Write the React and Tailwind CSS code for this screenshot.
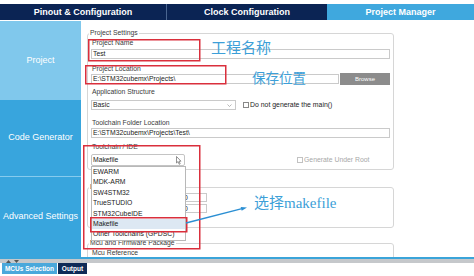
import React from "react";

const lbl = "text-[6.8px] leading-[8px] pl-[1px] text-[#3a3a3a] whitespace-nowrap";
const inp = "h-[10px] border border-[#cacaca] bg-white text-[6.8px] leading-[8px] pl-[1px] text-[#222] whitespace-nowrap overflow-hidden";

function Cursor() {
  return (
    <svg width="6" height="9" viewBox="0 0 6 9" className="shrink-0">
      <path d="M0.5 0.5 L0.5 7 L2 5.6 L3.2 8.3 L4.2 7.8 L3 5.2 L5 5.2 Z" fill="#fff" stroke="#666" strokeWidth="0.7" />
    </svg>
  );
}

export default function App() {
  const items = ["EWARM", "MDK-ARM", "SW4STM32", "TrueSTUDIO", "STM32CubeIDE", "Makefile", "Other Toolchains (GPDSC)"];
  const boxes = [
    [88.75, 39.75, 111, 21],
    [85.75, 65.75, 140, 18],
    [83.75, 145.75, 116, 103],
    [90.75, 217.75, 96, 14],
  ];
  return (
    <div className="relative w-[474px] h-[276px] overflow-hidden bg-white font-['Liberation_Sans',Arial,sans-serif] text-[#333]">
      <div className="h-[4px]" />
      <div className="flex h-[16px] text-[9px] font-bold text-white leading-[16px]">
        <div className="w-[166px] bg-[#0b2454] text-center">Pinout &amp; Configuration</div>
        <div className="w-[1px] bg-[#4a6590]" />
        <div className="w-[160px] bg-[#0b2454] text-center">Clock Configuration</div>
        <div className="flex-1 bg-[#3fa8de] text-center">Project Manager</div>
      </div>
      <div className="h-[1px]" />
      <div className="flex h-[236px]">
        <div className="w-[81px] flex flex-col text-white text-[9px]">
          <div className="h-[79px] bg-[#80c8ec] flex items-center justify-center">Project</div>
          <div className="h-[76px] bg-[#38a5dd] flex items-center justify-center">Code Generator</div>
          <div className="h-[1px] bg-[#86cbee]" />
          <div className="flex-1 bg-[#38a5dd] flex items-center justify-center">Advanced Settings</div>
        </div>
        <div className="w-[1px]" />
        <div className="flex-1 pl-[5px] overflow-hidden">
          <fieldset className="mt-[8px] w-[307px] border border-[#d6d6d6] rounded-[3px] px-[3px] pb-[3px]">
            <legend className="ml-[-2px] px-[1px] text-[6.8px] leading-[8px] text-[#3a3a3a]">Project Settings</legend>
            <div className={`mt-[2px] ${lbl}`}>Project Name</div>
            <div className={`mt-[2px] ${inp}`}>Test</div>
            <div className={`mt-[6px] ${lbl}`}>Project Location</div>
            <div className="flex items-center h-[12px]">
              <div className={`w-[248px] ${inp}`}>{"E:\\STM32cubemx\\Projects\\"}</div>
              <div className="ml-[1px] w-[50px] h-[12px] bg-[#8c8c8c] text-white text-[6px] text-center leading-[12px]">Browse</div>
            </div>
            <div className={`mt-[3px] ${lbl}`}>Application Structure</div>
            <div className="mt-[4px] flex items-center h-[10px]">
              <div className={`w-[145px] flex items-center justify-between pr-[3px] ${inp}`}>
                <span>Basic</span>
                <svg width="5" height="3" viewBox="0 0 5 3"><path d="M0.5 0.5 L2.5 2.5 L4.5 0.5" fill="none" stroke="#999" strokeWidth="0.7" /></svg>
              </div>
              <div className="ml-[7px] w-[6px] h-[6px] border border-[#888] bg-white" />
              <div className="ml-[1px] text-[6.9px] leading-[8px] text-[#222]">Do not generate the main()</div>
            </div>
            <div className={`mt-[9px] ${lbl}`}>Toolchain Folder Location</div>
            <div className={`mt-[1px] ${inp}`}>{"E:\\STM32cubemx\\Projects\\Test\\"}</div>
            <div className={`mt-[5px] ${lbl}`}>Toolchain / IDE</div>
            <div className="mt-[3px] flex items-center h-[12px]">
              <div className="w-[94px] h-[12px] border border-[#c4c4c4] rounded-[2px] flex items-center justify-between pl-[1px] pr-[2px] text-[6.8px] leading-[8px] text-[#222]">
                <span>Makefile</span>
                <Cursor />
              </div>
              <div className="ml-[112px] w-[6px] h-[6px] border border-[#c2c2c2] bg-white" />
              <div className="ml-[1px] text-[6.85px] leading-[8px] text-[#a8a8a8]">Generate Under Root</div>
            </div>
          </fieldset>

          <fieldset className="mt-[13px] w-[307px] border border-[#d6d6d6] rounded-[3px] px-[3px] pb-[14px]">
            <legend className="ml-[-2px] px-[1px] text-[6.8px] leading-[8px] text-[#3a3a3a]">L</legend>
            <div className="mt-[2px] flex items-center h-[9px]">
              <div className="w-[79px]" />
              <div className="w-[37px] h-[9px] border border-[#cacaca] text-[6.8px] leading-[7px] pl-[13px] text-[#222]">0</div>
            </div>
            <div className="mt-[2px] flex items-center h-[9px]">
              <div className="w-[79px]" />
              <div className="w-[37px] h-[9px] border border-[#cacaca] text-[6.8px] leading-[7px] pl-[13px] text-[#222]">0</div>
            </div>
          </fieldset>

          <fieldset className="mt-[11px] w-[307px] border border-[#d6d6d6] rounded-[3px] px-[3px] pb-[10px]">
            <legend className="ml-[-2px] px-[1px] text-[6.8px] leading-[8px] text-[#3a3a3a]">Mcu and Firmware Package</legend>
            <div className={`mt-[2px] ${lbl}`}>Mcu Reference</div>
          </fieldset>
        </div>
      </div>
      <div className="h-[2px] bg-[#3aa4d9]" />
      <div className="h-[4px] bg-[#c5c8cb] flex items-center pl-[6px] gap-[3px]">
        <svg width="5" height="3" viewBox="0 0 5 3"><path d="M0 3 L2.5 0 L5 3 Z" fill="#555" /></svg>
        <svg width="5" height="3" viewBox="0 0 5 3"><path d="M0 0 L2.5 3 L5 0 Z" fill="#555" /></svg>
      </div>
      <div className="flex h-[11px] pl-[2px] gap-[1px] text-[6.5px] font-bold text-white leading-[11px]">
        <div className="w-[55px] bg-[#4aa8db] text-center">MCUs Selection</div>
        <div className="w-[29px] bg-[#0f2b57] text-center">Output</div>
      </div>

      {/* open dropdown list */}
      <div className="absolute left-[91px] top-[166px] w-[95px] h-[75px] bg-white border border-[#b8b8b8] text-[6.8px] text-[#222]">
        {items.map((t) => (
          <div key={t} className={`h-[10.4px] leading-[10.4px] pl-[1px] whitespace-nowrap ${t === "Makefile" ? "bg-[#dde8f3]" : ""}`}>{t}</div>
        ))}
      </div>

      {/* annotation drawing: red boxes + arrow */}
      <svg className="absolute left-0 top-0 pointer-events-none" width="474" height="276" viewBox="0 0 474 276">
        {boxes.map(([x, y, w, h], i) => (
          <rect key={i} x={x} y={y} width={w} height={h} fill="none" stroke="#da2f3c" strokeWidth="1.5" />
        ))}
        <line x1="186" y1="223" x2="242" y2="208.6" stroke="#2b8fd3" strokeWidth="1.3" />
        <polygon points="247,207.5 241.7,210.8 240.7,207" fill="#2b8fd3" />
      </svg>

      {/* annotation texts */}
      <div className="absolute left-[211px] top-[40px] text-[15px] leading-[16px] text-[#3d9fd8] font-['Liberation_Serif','Noto_Sans_CJK_SC',serif] whitespace-nowrap">工程名称</div>
      <div className="absolute left-[252px] top-[71px] text-[13.5px] leading-[15px] text-[#3d9fd8] font-['Liberation_Serif','Noto_Sans_CJK_SC',serif] whitespace-nowrap">保存位置</div>
      <div className="absolute left-[254px] top-[195px] text-[15px] leading-[16px] text-[#3d9fd8] font-['Liberation_Serif','Noto_Sans_CJK_SC',serif] whitespace-nowrap">选择makefile</div>
    </div>
  );
}
